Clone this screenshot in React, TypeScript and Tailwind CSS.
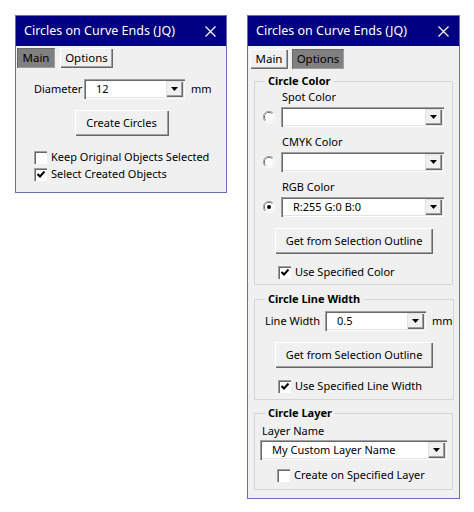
import React from 'react';

const font = { fontFamily: '"Noto Sans", "Open Sans", Arial, sans-serif' };

function TitleBar({ title }: { title: string }) {
  return (
    <div className="h-[30px] bg-[#000080] flex items-center justify-between pl-[8px] pr-[10px] text-white">
      <span className="text-[12.5px] leading-none">{title}</span>
      <svg width="11" height="11" viewBox="0 0 11 11">
        <path d="M0.5 0.5 L10.5 10.5 M10.5 0.5 L0.5 10.5" stroke="white" strokeWidth="1.2" />
      </svg>
    </div>
  );
}

function Tab({ label, active, w }: { label: string; active?: boolean; w: string }) {
  return (
    <div
      className={`${w} h-[20px] flex items-center justify-center text-[11.5px] text-black ${
        active
          ? 'bg-[#808080] shadow-[inset_1px_1px_0_#696969,inset_-1px_-1px_0_#a0a0a0]'
          : 'bg-[#f0f0f0] shadow-[inset_1px_1px_0_#ffffff,inset_-1px_-1px_0_#696969,inset_-2px_-2px_0_#a0a0a0]'
      }`}
    >
      {label}
    </div>
  );
}

function Combo({ value, w }: { value: string; w: string }) {
  return (
    <div className={`${w} h-[20px] bg-white flex items-stretch shadow-[inset_1px_1px_0_#a0a0a0,inset_2px_2px_0_#696969,inset_-1px_-1px_0_#ffffff,inset_-2px_-2px_0_#e3e3e3]`}>
      <span className="flex-1 pl-[12px] pt-[2px] text-[11px] leading-[16px] text-black whitespace-nowrap overflow-hidden">{value}</span>
      <div className="w-[17px] mt-[2px] mb-[2px] mr-[2px] bg-[#f0f0f0] flex items-center justify-center shadow-[inset_1px_1px_0_#e3e3e3,inset_-1px_-1px_0_#696969,inset_-2px_-2px_0_#a0a0a0]">
        <svg width="7" height="4" viewBox="0 0 7 4">
          <path d="M0 0 H7 L3.5 4 Z" fill="black" />
        </svg>
      </div>
    </div>
  );
}

function Button({ label, w }: { label: string; w: string }) {
  return (
    <div className={`${w} h-[26px] bg-[#f0f0f0] flex items-center justify-center text-[11px] text-black shadow-[inset_1px_1px_0_#ffffff,inset_-1px_-1px_0_#696969,inset_-2px_-2px_0_#a0a0a0]`}>
      {label}
    </div>
  );
}

function Check({ label, checked }: { label: string; checked?: boolean }) {
  return (
    <div className="flex items-center h-[16px] text-[11px] text-black">
      <div className="w-[13px] h-[13px] bg-white shadow-[inset_1px_1px_0_#a0a0a0,inset_2px_2px_0_#696969,inset_-1px_-1px_0_#ffffff] flex items-center justify-center">
        {checked && (
          <svg width="8" height="7" viewBox="0 0 8 7" className="ml-[1px] mt-[1px]">
            <path d="M0.5 3 L3 5.5 L7.5 0.5" stroke="black" strokeWidth="2" fill="none" />
          </svg>
        )}
      </div>
      <span className="ml-[4px] whitespace-nowrap">{label}</span>
    </div>
  );
}

function Radio({ checked }: { checked?: boolean }) {
  return (
    <svg width="12" height="12" viewBox="0 0 12 12">
      <path d="M10 2 A5.5 5.5 0 0 0 2 10" stroke="#a0a0a0" fill="none" />
      <path d="M9.2 2.8 A4.5 4.5 0 0 0 2.8 9.2" stroke="#696969" fill="none" />
      <path d="M2 10 A5.5 5.5 0 0 0 10 2" stroke="#ffffff" fill="none" />
      <circle cx="6" cy="6" r="4" fill="white" />
      {checked && <circle cx="6" cy="6" r="2" fill="black" />}
    </svg>
  );
}

function Group({ title, children, className = '' }: { title: string; children: React.ReactNode; className?: string }) {
  return (
    <fieldset className={`border border-[#d5d5d5] mx-[6px] ${className}`}>
      <legend className="ml-[10px] px-[3px] text-[11px] leading-[16px] font-bold text-black">{title}</legend>
      {children}
    </fieldset>
  );
}

function Label({ text, className = '' }: { text: string; className?: string }) {
  return <div className={`text-[11px] leading-[16px] text-black whitespace-nowrap ${className}`}>{text}</div>;
}

export default function App() {
  return (
    <div className="bg-white w-[474px] h-[512px] flex items-start gap-[20px] pl-[15px] pt-[15px]" style={font}>
      <div className="w-[212px] border border-[#6c6cb4] bg-[#f0f0f0]">
        <TitleBar title="Circles on Curve Ends (JQ)" />
        <div className="pt-[2px] pl-[1px] pb-[10px]">
          <div className="flex gap-[5px]">
            <Tab label="Main" active w="w-[38px]" />
            <Tab label="Options" w="w-[53px]" />
          </div>
          <div className="flex items-center mt-[11px] pl-[17px]">
            <Label text="Diameter" className="w-[50px]" />
            <Combo value="12" w="w-[101px]" />
            <Label text="mm" className="ml-[6px]" />
          </div>
          <div className="flex justify-center mt-[11px]">
            <Button label="Create Circles" w="w-[94px]" />
          </div>
          <div className="pl-[17px] mt-[13px] flex flex-col gap-[1px]">
            <Check label="Keep Original Objects Selected" />
            <Check label="Select Created Objects" checked />
          </div>
        </div>
      </div>

      <div className="w-[213px] border border-[#6c6cb4] bg-[#f0f0f0]">
        <TitleBar title="Circles on Curve Ends (JQ)" />
        <div className="pt-[3px] pl-[2px] pb-[7px]">
          <div className="flex gap-[4px]">
            <Tab label="Main" w="w-[38px]" />
            <Tab label="Options" active w="w-[52px]" />
          </div>
        </div>
        <div className="-mt-[7px] pb-[8px]">
          <Group title="Circle Color" className="mt-[4px] pb-[4px]">
            <Label text="Spot Color" className="pl-[27px]" />
            <div className="flex items-center mt-[2px] pl-[8px]">
              <Radio />
              <Combo value="" w="w-[163px] ml-[6px]" />
            </div>
            <Label text="CMYK Color" className="mt-[7px] pl-[27px]" />
            <div className="flex items-center mt-[2px] pl-[8px]">
              <Radio />
              <Combo value="" w="w-[163px] ml-[6px]" />
            </div>
            <Label text="RGB Color" className="mt-[7px] pl-[27px]" />
            <div className="flex items-center mt-[2px] pl-[8px]">
              <Radio checked />
              <Combo value="R:255 G:0 B:0" w="w-[163px] ml-[6px]" />
            </div>
            <div className="mt-[11px] pl-[20px]">
              <Button label="Get from Selection Outline" w="w-[158px]" />
            </div>
            <div className="mt-[10px] pl-[23px]">
              <Check label="Use Specified Color" checked />
            </div>
          </Group>

          <Group title="Circle Line Width" className="mt-[6px] pb-[5px]">
            <div className="flex items-center mt-[4px] pl-[10px]">
              <Label text="Line Width" className="w-[60px]" />
              <Combo value="0.5" w="w-[101px]" />
              <Label text="mm" className="ml-[6px]" />
            </div>
            <div className="mt-[11px] pl-[20px]">
              <Button label="Get from Selection Outline" w="w-[158px]" />
            </div>
            <div className="mt-[10px] pl-[23px]">
              <Check label="Use Specified Line Width" checked />
            </div>
          </Group>

          <Group title="Circle Layer" className="mt-[5px] pb-[6px]">
            <Label text="Layer Name" className="mt-[2px] pl-[7px]" />
            <div className="mt-[1px] pl-[5px]">
              <Combo value="My Custom Layer Name" w="w-[187px]" />
            </div>
            <div className="mt-[7px] pl-[22px]">
              <Check label="Create on Specified Layer" />
            </div>
          </Group>
        </div>
      </div>
    </div>
  );
}
